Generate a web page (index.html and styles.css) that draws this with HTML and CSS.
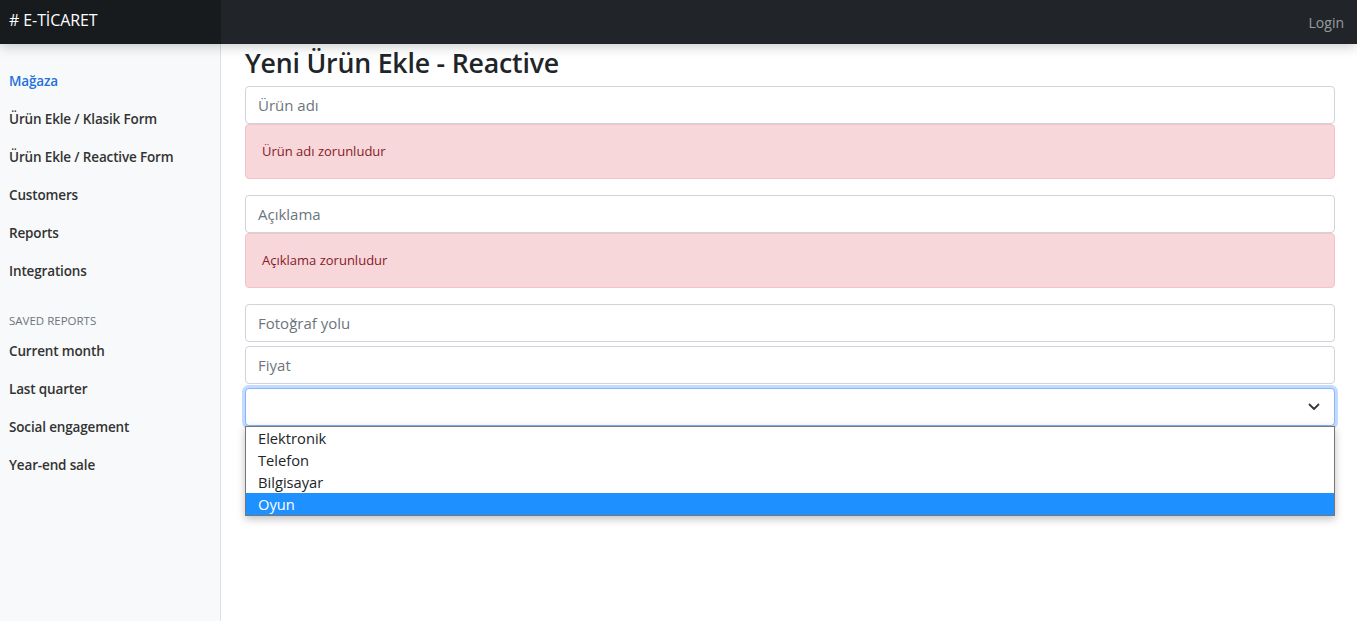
FILE: index.html
```html
<!DOCTYPE html>
<html lang="tr">
<head>
<meta charset="utf-8">
<title>E-Ticaret</title>
<link rel="stylesheet" href="styles.css">
</head>
<body>
<header class="navbar">
  <a class="brand" href="#"># E-TİCARET</a>
  <a class="login" href="#">Login</a>
</header>
<div class="layout">
  <aside class="sidebar">
    <ul class="nav">
      <li><a class="nav-link active" href="#">Mağaza</a></li>
      <li><a class="nav-link" href="#">Ürün Ekle / Klasik Form</a></li>
      <li><a class="nav-link" href="#">Ürün Ekle / Reactive Form</a></li>
      <li><a class="nav-link" href="#">Customers</a></li>
      <li><a class="nav-link" href="#">Reports</a></li>
      <li><a class="nav-link" href="#">Integrations</a></li>
    </ul>
    <h6 class="sidebar-heading">Saved reports</h6>
    <ul class="nav">
      <li><a class="nav-link" href="#">Current month</a></li>
      <li><a class="nav-link" href="#">Last quarter</a></li>
      <li><a class="nav-link" href="#">Social engagement</a></li>
      <li><a class="nav-link" href="#">Year-end sale</a></li>
    </ul>
  </aside>
  <main class="main">
    <h3 class="title">Yeni Ürün Ekle - Reactive</h3>
    <form class="form">
      <div class="group">
        <input class="form-control" type="text" placeholder="Ürün adı">
        <div class="alert">Ürün adı zorunludur</div>
      </div>
      <div class="group">
        <input class="form-control" type="text" placeholder="Açıklama">
        <div class="alert">Açıklama zorunludur</div>
      </div>
      <div class="group tight">
        <input class="form-control" type="text" placeholder="Fotoğraf yolu">
        <input class="form-control" type="text" placeholder="Fiyat">
        <div class="select-wrap">
          <div class="form-select">
            <svg class="chevron" width="16" height="12" viewBox="0 0 16 12"><path d="M3.5 3.5l4.5 4.5 4.5-4.5" fill="none" stroke="#343a40" stroke-width="1.8" stroke-linecap="round" stroke-linejoin="round"/></svg>
          </div>
          <ul class="dropdown">
            <li class="option">Elektronik</li>
            <li class="option">Telefon</li>
            <li class="option">Bilgisayar</li>
            <li class="option selected">Oyun</li>
          </ul>
        </div>
      </div>
    </form>
  </main>
</div>
</body>
</html>
```
FILE: styles.css
```css
* { box-sizing: border-box; }
html, body { margin: 0; height: 100%; }
body {
  font-family: "Open Sans", "Noto Sans", sans-serif;
  color: #212529;
  background: #fff;
  overflow: hidden;
}
a { text-decoration: none; }

.navbar {
  position: relative;
  z-index: 10;
  display: flex;
  align-items: stretch;
  height: 44px;
  background: #212529;
  box-shadow: 0 2px 12px rgba(0,0,0,.22);
}
.brand {
  width: 221px;
  display: flex;
  align-items: center;
  padding-left: 9px;
  padding-bottom: 4px;
  background: rgba(0,0,0,.25);
  color: #fff;
  font-size: 16px;
  letter-spacing: -0.1px;
}
.login {
  margin-left: auto;
  display: flex;
  align-items: center;
  padding-right: 13px;
  color: rgba(255,255,255,.55);
  font-size: 14px;
}

.layout {
  display: flex;
  height: calc(100% - 44px);
}
.sidebar {
  width: 221px;
  flex: none;
  background: #f8f9fa;
  border-right: 1px solid #dee2e6;
  padding-top: 18px;
}
.nav { list-style: none; margin: 0; padding: 0; }
.nav-link {
  display: block;
  padding: 8px 9px;
  line-height: 22px;
  font-size: 13.5px;
  font-weight: 600;
  color: #333;
  letter-spacing: -0.15px;
}
.nav-link.active { color: #2470dc; }
.sidebar-heading {
  margin: 22px 0 2px;
  padding: 0 9px;
  line-height: 18px;
  font-size: 11.5px;
  font-weight: 400;
  text-transform: uppercase;
  color: #6c757d;
}

.main {
  flex: 1;
  padding: 0 22px 0 24px;
}
.title {
  margin: 2px 0 7px;
  font-size: 26.7px;
  line-height: 33px;
  font-weight: 600;
  color: #212529;
  letter-spacing: -0.2px;
}
.form { display: flex; flex-direction: column; gap: 16px; }
.group { display: flex; flex-direction: column; }
.group.tight { gap: 4px; }

.form-control {
  display: block;
  width: 100%;
  height: 38px;
  padding: 6px 12px;
  font: inherit;
  font-size: 15px;
  color: #212529;
  background: #fff;
  border: 1px solid #ced4da;
  border-radius: 4px;
  outline: none;
}
.form-control::placeholder { color: #6c757d; opacity: 1; }

.alert {
  padding: 16px;
  line-height: 21px;
  font-size: 13px;
  color: #842029;
  background: #f8d7da;
  border: 1px solid #f5c2c7;
  border-radius: 4px;
}

.select-wrap { position: relative; }
.form-select {
  height: 38px;
  display: flex;
  align-items: center;
  justify-content: flex-end;
  padding-right: 12px;
  background: #fff;
  border: 1px solid #86b7fe;
  border-radius: 4px;
  box-shadow: 0 0 0 3px rgba(13,110,253,.25);
}
.chevron { display: block; }
.dropdown {
  position: absolute;
  top: 100%;
  left: 0;
  right: 0;
  margin: 0;
  padding: 0;
  list-style: none;
  background: #fff;
  border: 1px solid #767676;
  box-shadow: 0 3px 8px rgba(0,0,0,.25);
  z-index: 5;
}
.option {
  height: 22px;
  line-height: 22px;
  padding-left: 12px;
  font-size: 14.7px;
  color: #212529;
}
.option.selected { background: #1e90ff; color: #fff; }
```
